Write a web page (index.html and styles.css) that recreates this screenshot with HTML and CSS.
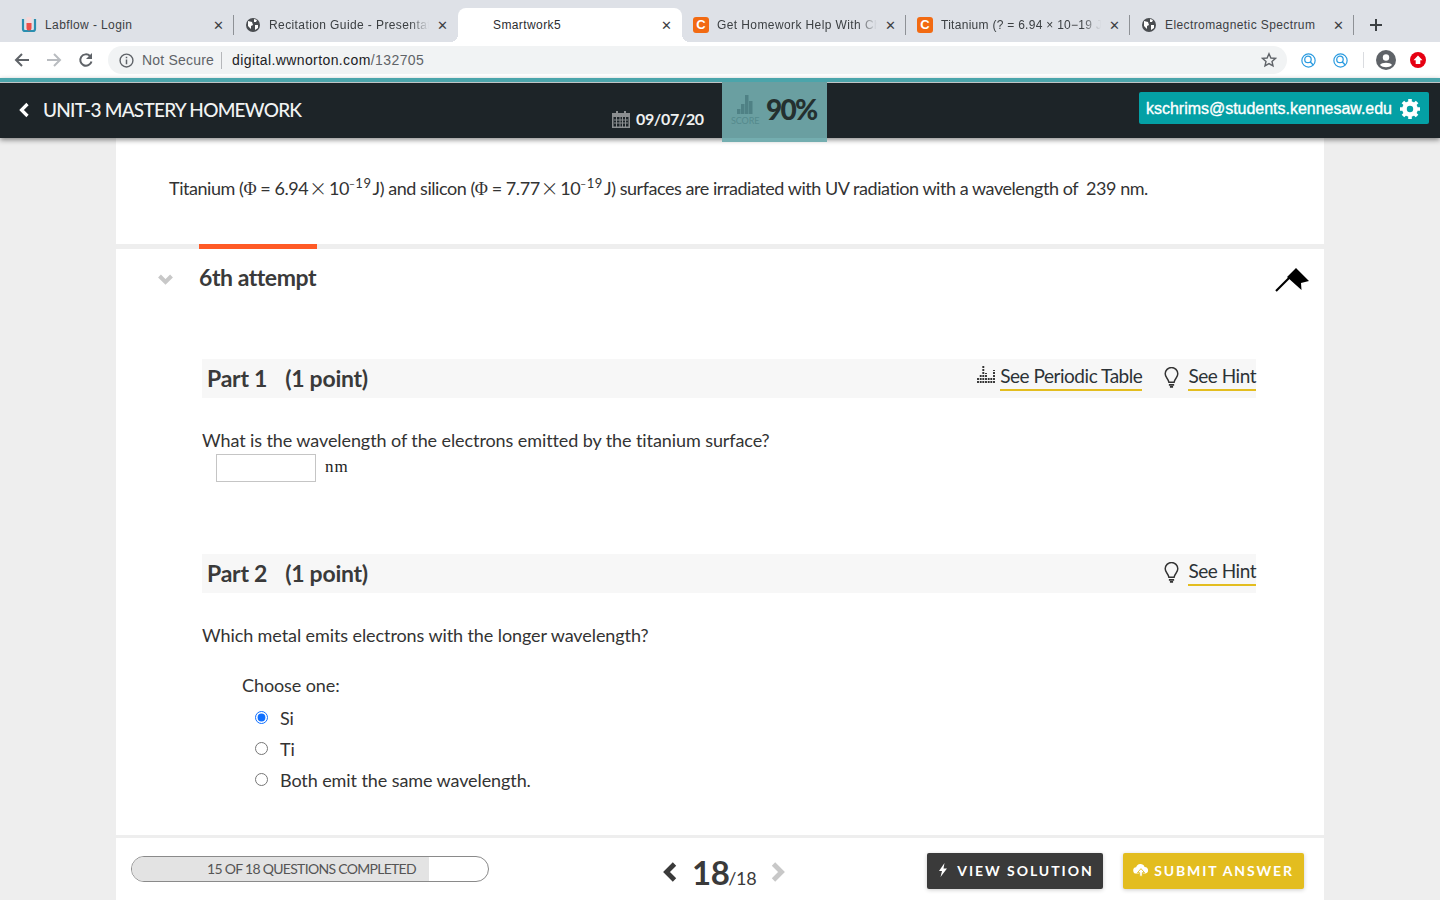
FILE: index.html
```html
<!DOCTYPE html>
<html lang="en">
<head>
    <meta charset="UTF-8">
    <title>Smartwork5</title>
    <link rel="stylesheet" href="styles.css">
</head>
<body>
    <div class="tabstrip">
        <div class="tab sep">
            <svg class="favicon" viewBox="0 0 16 16"><path d="M2 2v10q0 2 2 2h8q2 0 2-2V2" fill="none" stroke="#2a8fb0" stroke-width="2.200"/><path d="M5.500 0h5v10a2.500 2.500 0 0 1-5 0z" fill="#f6d9da"/><path d="M5.500 6h5v5a2.500 2.500 0 0 1-5 0z" fill="#ee4f48"/></svg>
            <span class="tab-title">Labflow - Login</span>
            <span class="tab-x">✕</span>
        </div>
        <div class="tab">
            <svg class="favicon" viewBox="0 0 16 16"><circle cx="8" cy="8" r="7" fill="#4a4d51"/><path d="M3 4l4 1 1 3-2 1v3l-3-3zM9 2l3 1-1 2-2 0zM10 8l3 0 0 3-3 2z" fill="#fff"/></svg>
            <span class="tab-title fade">Recitation Guide - Presentat</span>
            <span class="tab-x">✕</span>
        </div>
        <div class="tab active">
            <span class="favicon"></span>
            <span class="tab-title">Smartwork5</span>
            <span class="tab-x">✕</span>
        </div>
        <div class="tab sep">
            <span class="chegg">C</span>
            <span class="tab-title fade">Get Homework Help With Ch</span>
            <span class="tab-x">✕</span>
        </div>
        <div class="tab sep">
            <span class="chegg">C</span>
            <span class="tab-title fade tight">Titanium (? = 6.94 × 10−19 J</span>
            <span class="tab-x">✕</span>
        </div>
        <div class="tab sep">
            <svg class="favicon" viewBox="0 0 16 16"><circle cx="8" cy="8" r="7" fill="#4a4d51"/><path d="M3 4l4 1 1 3-2 1v3l-3-3zM9 2l3 1-1 2-2 0zM10 8l3 0 0 3-3 2z" fill="#fff"/></svg>
            <span class="tab-title">Electromagnetic Spectrum</span>
            <span class="tab-x">✕</span>
        </div>
        <svg class="newtab" viewBox="0 0 12 12"><path d="M6 0v12M0 6h12" stroke="#3c4043" stroke-width="2"/></svg>
    </div>

    <div class="toolbar">
        <svg class="nav-icon" viewBox="0 0 16 16"><path d="M15 8H2M8 2L2 8l6 6" fill="none" stroke="#5f6368" stroke-width="2"/></svg>
        <svg class="nav-icon" viewBox="0 0 16 16"><path d="M1 8h13M8 2l6 6-6 6" fill="none" stroke="#b9bcc0" stroke-width="2"/></svg>
        <svg class="nav-icon" viewBox="0 0 16 16"><path d="M13.500 9.500A5.700 5.700 0 1 1 12 4" fill="none" stroke="#5f6368" stroke-width="2"/><path d="M14 1v6H8z" fill="#5f6368"/></svg>
        <div class="omnibox">
            <svg class="info" viewBox="0 0 14 14"><circle cx="7" cy="7" r="6" fill="none" stroke="#5f6368" stroke-width="1.300"/><path d="M7 6v4.500M7 3.400v1.500" stroke="#5f6368" stroke-width="1.400"/></svg>
            <span class="not-secure">Not Secure</span>
            <span class="url"><b>digital.wwnorton.com</b>/132705</span>
            <svg class="star" viewBox="0 0 16 16"><path d="M8 1.800l1.900 4.200 4.500.4-3.400 3 1 4.500L8 11.600l-4 2.300 1-4.500-3.400-3 4.500-.4z" fill="none" stroke="#5f6368" stroke-width="1.400"/></svg>
        </div>
        <div class="extensions">
            <svg class="ext" viewBox="0 0 14 14"><circle cx="7" cy="7" r="6.200" fill="none" stroke="#2b9be0" stroke-width="1.100"/><circle cx="6.500" cy="6" r="3" fill="none" stroke="#2b9be0" stroke-width="1.200"/><path d="M8.500 8.200l3 3" stroke="#2b9be0" stroke-width="1.300"/></svg>
            <svg class="ext" viewBox="0 0 14 14"><circle cx="7" cy="7" r="6.200" fill="none" stroke="#2b9be0" stroke-width="1.100"/><circle cx="6.500" cy="6" r="3" fill="none" stroke="#2b9be0" stroke-width="1.200"/><path d="M8.500 8.200l3 3" stroke="#2b9be0" stroke-width="1.300"/></svg>
            <span class="ext-sep"></span>
            <svg class="avatar" viewBox="0 0 20 20"><circle cx="10" cy="10" r="10" fill="#5f6368"/><circle cx="10" cy="7.500" r="3.200" fill="#fff"/><path d="M4 15c1.500-3 10.500-3 12 0-3 3-9 3-12 0z" fill="#fff"/></svg>
            <svg class="update" viewBox="0 0 16 16"><circle cx="8" cy="8" r="8" fill="#e60012"/><path d="M8 3.500l4.500 4.800H10.300V12H5.700V8.300H3.500z" fill="#fff"/></svg>
        </div>
    </div>

    <header class="topbar">
        <svg class="back" viewBox="0 0 12 16"><path d="M9.500 2L3.500 8l6 6" fill="none" stroke="#fff" stroke-width="3.200"/></svg>
        <h1>UNIT-3 MASTERY HOMEWORK</h1>
        <div class="due">
            <svg class="cal" viewBox="0 0 18 18"><path d="M0 3h18v15H0z" fill="#8b8e90"/><path d="M4 1h2v3H4zM12 1h2v3h-2z" fill="#8b8e90"/><path d="M1.500 7h15v9.500h-15z" fill="#1d2428"/><path d="M4.500 7v10M8 7v10M10.500 7v10M13.500 7v10M2 10h14M2 13h14" stroke="#8b8e90"/></svg>
            <span>09/07/20</span>
        </div>
        <div class="score">
            <div class="score-mark">
                <svg class="bars" viewBox="0 0 16 19"><path d="M0 14h3.500v5H0zM4 9h3.500v10H4zM8 0h3.500v19H8zM12 6h3.500v13H12z" fill="#4f8185"/></svg>
                <span>SCORE</span>
            </div>
            <span class="score-num">90%</span>
        </div>
        <div class="user">
            <span>kschrims@students.kennesaw.edu</span>
            <svg class="gear" viewBox="0 0 22 22"><circle cx="11" cy="11" r="5.500" fill="none" stroke="#fff" stroke-width="4.600"/><path d="M11 1v20M1 11h20M3.900 3.900l14.200 14.200M18.100 3.900L3.900 18.100" stroke="#fff" stroke-width="3.600" stroke-dasharray="4.500 11 4.500"/></svg>
        </div>
    </header>

    <main class="sheet">
        <section class="stem">
            <p>Titanium (<span class="phi">Φ</span> = 6.94<span class="times">×</span>10<sup><span class="minus">−</span>19</sup>J) and silicon (<span class="phi">Φ</span> = 7.77<span class="times">×</span>10<sup><span class="minus">−</span>19</sup>J) surfaces are irradiated with UV radiation with a wavelength of &nbsp;239 nm.</p>
        </section>
        <div class="divider"><span class="divider-mark"></span></div>

        <section class="attempt">
            <div class="attempt-head">
                <svg class="chevron" viewBox="0 0 16 11"><path d="M2 2l6 6 6-6" fill="none" stroke="#c8c8c8" stroke-width="4"/></svg>
                <h2>6th attempt</h2>
                <svg class="pin" viewBox="0 0 36 26"><path d="M1 24L16 9" stroke="#000" stroke-width="2.200"/><path d="M21 1l13 13-8 2 .5 7L12 10z" fill="#000"/></svg>
            </div>

            <div class="part first">
                <div class="part-bar">
                    <span class="part-title">Part 1<span class="points">(1 point)</span></span>
                    <span class="tools">
                        <svg class="ptable" viewBox="0 0 18 18"><path d="M1 18v-5M3.700 18v-8M6.300 18V0M9 18V8M11.700 18v-6M14.300 18v-5M17 18V5" stroke="#333" stroke-width="1.900" stroke-dasharray="2 1"/></svg>
                        <a class="tool-link">See Periodic Table</a>
                        <svg class="bulb" viewBox="0 0 14 20"><path d="M4.500 14.500C4 11 1 10 1 6.500a6 6 0 0 1 12 0c0 3.500-3 4.500-3.500 8z" fill="none" stroke="#333" stroke-width="1.400"/><path d="M4.500 17h5M5.500 19h3" stroke="#333" stroke-width="1.600"/></svg>
                        <a class="tool-link">See Hint</a>
                    </span>
                </div>
                <p class="question">What is the wavelength of the electrons emitted by the titanium surface?</p>
                <div class="answer">
                    <input class="answer-box" type="text">
                    <span class="unit">nm</span>
                </div>
            </div>

            <div class="part second">
                <div class="part-bar">
                    <span class="part-title">Part 2<span class="points">(1 point)</span></span>
                    <span class="tools">
                        <svg class="bulb" viewBox="0 0 14 20"><path d="M4.500 14.500C4 11 1 10 1 6.500a6 6 0 0 1 12 0c0 3.500-3 4.500-3.500 8z" fill="none" stroke="#333" stroke-width="1.400"/><path d="M4.500 17h5M5.500 19h3" stroke="#333" stroke-width="1.600"/></svg>
                        <a class="tool-link">See Hint</a>
                    </span>
                </div>
                <p class="question">Which metal emits electrons with the longer wavelength?</p>
                <div class="choices">
                    <p class="choose">Choose one:</p>
                    <label class="choice"><input type="radio" name="metal" checked><span>Si</span></label>
                    <label class="choice"><input type="radio" name="metal"><span>Ti</span></label>
                    <label class="choice"><input type="radio" name="metal"><span>Both emit the same wavelength.</span></label>
                </div>
            </div>
        </section>

        <footer class="bottom">
            <div class="progress">
                <div class="progress-fill">15 OF 18 QUESTIONS COMPLETED</div>
            </div>
            <div class="pager">
                <svg class="pager-arrow" viewBox="0 0 16 22"><path d="M12.500 3l-8 8 8 8" fill="none" stroke="#3a3a3a" stroke-width="4.800"/></svg>
                <span class="pager-num">18</span><span class="pager-total">/18</span>
                <svg class="pager-arrow next" viewBox="0 0 16 22"><path d="M3.500 3l8 8-8 8" fill="none" stroke="#c8c8c8" stroke-width="4.800"/></svg>
            </div>
            <div class="actions">
                <button class="btn dark">
                    <svg class="btn-icon" viewBox="0 0 10 14"><path d="M6.500 0L1 8h3l-1.500 6L9 5.500H5.500z" fill="#fff"/></svg>
                    VIEW SOLUTION
                </button>
                <button class="btn gold">
                    <svg class="btn-icon wide" viewBox="0 0 18 14"><path d="M4 11a3.500 3.500 0 0 1-.5-7A5 5 0 0 1 13 3.500 3.800 3.800 0 0 1 14 11z" fill="#fff"/><path d="M9 5.500l4 4.500h-2.500v4h-3v-4H5z" fill="#fff" stroke="#e3bd1f"/></svg>
                    SUBMIT ANSWER
                </button>
            </div>
        </footer>
    </main>
</body>
</html>
```

FILE: styles.css
```css
* {
    box-sizing: border-box;
}
html, body {
    margin: 0;
    height: 900px;
    overflow: hidden;
}
body {
    display: flex;
    flex-direction: column;
    font-family: Lato, "Liberation Sans", sans-serif;
    background: #eeeeee;
    color: #333;
}

/* browser chrome */
.tabstrip {
    height: 42px;
    flex: none;
    display: flex;
    align-items: flex-end;
    padding-left: 10px;
    background: #dee1e7;
    font-family: "Liberation Sans", Arial, sans-serif;
    font-size: 12px;
    letter-spacing: 0.4px;
    color: #3c4043;
}
.tab {
    width: 224px;
    height: 34px;
    display: flex;
    align-items: center;
    padding: 0 10px 0 11px;
    position: relative;
}
.tab.sep::after {
    content: "";
    position: absolute;
    right: 0;
    top: 7px;
    height: 20px;
    width: 1px;
    background: #8e9196;
}
.tab.active {
    background: #fff;
    border-radius: 8px 8px 0 0;
    color: #2b2d30;
}
.tab.active::before,
.tab.active::after {
    content: "";
    position: absolute;
    bottom: 0;
    width: 8px;
    height: 8px;
}
.tab.active::before {
    left: -8px;
    background: radial-gradient(circle at 0 0, transparent 8px, #fff 8px);
}
.tab.active::after {
    right: -8px;
    background: radial-gradient(circle at 100% 0, transparent 8px, #fff 8px);
}
.favicon {
    width: 16px;
    height: 16px;
    flex: none;
}
.chegg {
    width: 16px;
    height: 16px;
    flex: none;
    border-radius: 3px;
    background: #f26a12;
    color: #fff;
    font-weight: bold;
    font-size: 13px;
    line-height: 16px;
    letter-spacing: 0;
    text-align: center;
}
.tab-title {
    flex: 1;
    margin-left: 8px;
    white-space: nowrap;
    overflow: hidden;
}
.tab-title.fade {
    -webkit-mask-image: linear-gradient(to right, #000 88%, transparent 100%);
    mask-image: linear-gradient(to right, #000 88%, transparent 100%);
}
.tab-title.tight {
    letter-spacing: 0.28px;
}
.tab-x {
    margin-left: 8px;
    font-size: 13px;
    letter-spacing: 0;
    color: #3c4043;
}
.newtab {
    width: 12px;
    height: 12px;
    margin: 0 0 11px 16px;
}
.toolbar {
    height: 36px;
    flex: none;
    display: flex;
    align-items: center;
    padding: 0 14px 0 14px;
    background: #fff;
    font-family: "Liberation Sans", Arial, sans-serif;
    font-size: 14px;
}
.nav-icon {
    width: 16px;
    height: 16px;
    margin-right: 16px;
}
.omnibox {
    width: 1179px;
    height: 28px;
    margin-left: -2px;
    display: flex;
    align-items: center;
    padding: 0 10px 0 11px;
    border-radius: 14px;
    background: #f1f3f4;
}
.info {
    width: 15px;
    height: 15px;
    margin-right: 8px;
}
.not-secure {
    color: #5f6368;
    padding-right: 7px;
    border-right: 1px solid #b5b7ba;
    line-height: 17px;
    letter-spacing: 0.2px;
    margin-right: 10px;
}
.url {
    flex: 1;
    color: #5f6368;
    letter-spacing: 0.4px;
}
.url b {
    font-weight: normal;
    color: #202124;
}
.star {
    width: 16px;
    height: 16px;
}
.extensions {
    display: flex;
    align-items: center;
    margin-left: 14px;
}
.ext {
    width: 15px;
    height: 15px;
    margin-right: 17px;
}
.ext-sep {
    width: 1px;
    height: 16px;
    background: #dadce0;
    margin: 0 12px 0 -2px;
}
.avatar {
    width: 20px;
    height: 20px;
    margin-right: 14px;
}
.update {
    width: 16px;
    height: 16px;
}

/* app header */
.topbar {
    height: 60px;
    flex: none;
    display: flex;
    padding-left: 18px;
    background: #1d2428;
    border-top: 4px solid #4ba5ab;
    box-shadow: inset 0 1px 0 #bfc4c6, 0 2px 5px rgba(0, 0, 0, 0.45);
    color: #fff;
    position: relative;
    z-index: 2;
}
.back {
    width: 12px;
    height: 16px;
    margin-top: 20px;
}
.topbar h1 {
    margin: 15px 0 0 13px;
    width: 569px;
    font-size: 19px;
    line-height: 26px;
    font-weight: 500;
    letter-spacing: -0.75px;
    color: #f1f3f3;
}
.due {
    width: 110px;
    display: flex;
    align-items: flex-start;
    padding-top: 27px;
    font-size: 16px;
    font-weight: 700;
    line-height: 20px;
    letter-spacing: -0.35px;
    color: #eef0f0;
}
.cal {
    width: 18px;
    height: 18px;
    margin: 1px 6px 0 0;
}
.score {
    width: 105px;
    height: 60px;
    display: flex;
    align-items: flex-start;
    padding: 13px 0 0 9px;
    background: #6a9fa1;
    border-bottom: 4px solid #74aeb0;
}
.score-mark {
    width: 35px;
    display: flex;
    flex-direction: column;
    align-items: flex-start;
}
.bars {
    width: 16px;
    height: 19px;
    margin-left: 6px;
}
.score-mark span {
    font-size: 9px;
    line-height: 8px;
    letter-spacing: -0.1px;
    margin-top: 3px;
    color: #558a8d;
}
.score-num {
    margin-top: -1px;
    font-size: 28px;
    font-weight: 900;
    line-height: 30px;
    letter-spacing: -1.8px;
    color: #24302f;
}
.user {
    height: 32px;
    margin: 10px 0 0 312px;
    width: 290px;
    display: flex;
    align-items: center;
    padding: 1px 0 0 7px;
    border-radius: 2px;
    background: #04a0a5;
    font-family: "Liberation Sans", Arial, sans-serif;
    font-size: 16px;
    letter-spacing: -0.02px;
    -webkit-text-stroke: 0.35px #fff;
    color: #fff;
}
.gear {
    width: 22px;
    height: 22px;
    margin-left: 7px;
    flex: none;
}

/* page */
.sheet {
    width: 1208px;
    flex: 1;
    min-height: 0;
    margin-left: 116px;
    display: flex;
    flex-direction: column;
    background: #fff;
    font-size: 18px;
    letter-spacing: -0.09px;
}
.stem {
    height: 106px;
    flex: none;
    padding: 37px 0 0 53px;
}
.stem p {
    margin: 0;
    line-height: 26px;
    letter-spacing: -0.45px;
    white-space: nowrap;
}
.phi {
    font-family: "Liberation Serif", serif;
    font-size: 18px;
}
.times {
    margin: 0 3px 0 2px;
    font-size: 27px;
    line-height: 10px;
    font-weight: 300;
    letter-spacing: 0;
    vertical-align: -3px;
}
sup {
    margin-right: 1px;
    font-size: 13px;
    line-height: 0;
    letter-spacing: 0.6px;
    vertical-align: 7px;
}
.minus {
    font-size: 10px;
}
.divider {
    height: 5px;
    flex: none;
    background: #eeeeee;
    padding-left: 83px;
}
.divider-mark {
    display: block;
    width: 118px;
    height: 5px;
    background: #ff5a26;
}
.attempt {
    flex: 1;
    min-height: 0;
    padding: 0 68px 0 86px;
}
.attempt-head {
    height: 60px;
    display: flex;
    align-items: flex-start;
    margin-left: -86px;
    margin-right: -68px;
    padding-left: 41px;
}
.chevron {
    width: 17px;
    height: 11px;
    margin-top: 25px;
}
.attempt-head h2 {
    margin: 13px 0 0 25px;
    font-size: 23px;
    line-height: 30px;
    font-weight: 700;
    letter-spacing: -0.45px;
    color: #3a3a3a;
}
.pin {
    width: 36px;
    height: 26px;
    margin: 18px 13px 0 auto;
}
.part.first {
    height: 195px;
    margin-top: 50px;
}
.part.second {
    height: 240px;
}
.part-bar {
    height: 39px;
    display: flex;
    justify-content: space-between;
    align-items: flex-start;
    background: #f7f7f7;
    padding-left: 5px;
}
.part-title {
    font-size: 23px;
    line-height: 39px;
    font-weight: 700;
    letter-spacing: -0.25px;
    color: #3a3a3a;
}
.points {
    margin-left: 18px;
}
.tools {
    display: flex;
    align-items: flex-start;
    padding-top: 5px;
}
.tool-link {
    height: 27px;
    font-size: 19px;
    line-height: 23px;
    letter-spacing: -0.47px;
    border-bottom: 2px solid #e3bd1f;
    color: #2c3236;
}
.ptable {
    width: 18px;
    height: 18px;
    margin: 1px 5px 0 0;
}
.bulb {
    width: 15px;
    height: 21px;
    margin: 3px 9px 0 22px;
}
.question {
    margin: 29px 0 0;
    line-height: 26px;
    color: #333;
}
.answer {
    display: flex;
    align-items: flex-start;
}
.answer-box {
    width: 100px;
    height: 28px;
    margin: 1px 0 0 14px;
    border: 1px solid #c5c5c5;
    background: #fff;
}
.unit {
    margin-left: 9px;
    font-family: "Liberation Serif", serif;
    font-size: 17px;
    line-height: 28px;
    letter-spacing: 1px;
    color: #222;
}
.choices {
    padding: 24px 0 0 40px;
}
.choose {
    margin: 0 0 4px;
    line-height: 26px;
}
.choice {
    height: 31px;
    display: flex;
    align-items: center;
    padding-left: 13px;
}
.choice input {
    width: 13px;
    height: 13px;
    margin: 0 12px 0 0;
    accent-color: #0f6fff;
}

/* bottom bar */
.bottom {
    height: 65px;
    flex: none;
    display: flex;
    align-items: flex-start;
    border-top: 3px solid #eeeeee;
    padding-left: 15px;
    letter-spacing: 0;
}
.progress {
    width: 358px;
    height: 26px;
    margin-top: 18px;
    border: 1px solid #8a8a8a;
    border-radius: 13px;
    overflow: hidden;
}
.progress-fill {
    width: 297px;
    height: 100%;
    background: #e3e3e3;
    padding-left: 75px;
    font-size: 14px;
    line-height: 24px;
    letter-spacing: -0.7px;
    color: #555;
    white-space: nowrap;
}
.pager {
    width: 438px;
    display: flex;
    align-items: flex-start;
    padding-left: 173px;
}
.pager-arrow {
    width: 16px;
    height: 22px;
    margin-top: 23px;
}
.pager-arrow.next {
    margin-left: 14px;
}
.pager-num {
    margin-left: 14px;
    font-size: 33px;
    line-height: 68px;
    font-weight: 700;
    letter-spacing: -0.5px;
    color: #3a3a3a;
}
.pager-total {
    margin-left: -1px;
    font-size: 18px;
    line-height: 80px;
    letter-spacing: -0.3px;
    color: #3a3a3a;
}
.actions {
    display: flex;
    gap: 20px;
    padding-top: 15px;
}
.btn {
    height: 36px;
    display: flex;
    align-items: center;
    justify-content: center;
    padding: 0 0 2px;
    border: none;
    border-radius: 2px;
    color: #fff;
    font-family: Lato, "Liberation Sans", sans-serif;
    font-size: 14px;
    font-weight: 700;
    letter-spacing: 1.85px;
    box-shadow: 0 1px 4px rgba(0, 0, 0, 0.2);
}
.btn.dark {
    width: 176px;
    padding-left: 2px;
    letter-spacing: 1.95px;
    background: #3a3a3a;
}
.btn.gold {
    width: 181px;
    background: #e3bd1f;
}
.btn-icon {
    width: 10px;
    height: 14px;
    margin-right: 9px;
}
.btn-icon.wide {
    width: 16px;
    margin-right: 5px;
}
```
